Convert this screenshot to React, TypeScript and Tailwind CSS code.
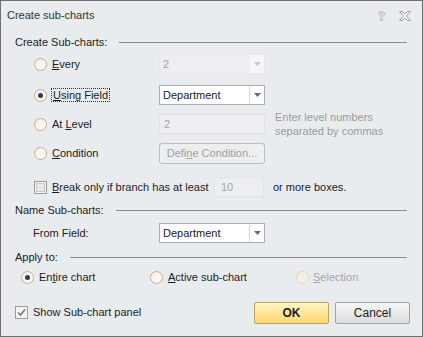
import React from 'react';

function Radio({ checked = false, disabled = false }: { checked?: boolean; disabled?: boolean }) {
  return (
    <span
      className={`relative inline-flex h-[13px] w-[13px] shrink-0 items-center justify-center rounded-full border ${
        disabled ? 'border-[#e6d6c4] bg-[#f2eee8]' : 'border-[#cfab8a] bg-gradient-to-br from-[#f4ede6] to-[#fdfcfb]'
      }`}
    >
      {checked && <span className="h-[5px] w-[5px] rounded-full bg-[#2b3f66]" />}
    </span>
  );
}

function Check({ checked = false }: { checked?: boolean }) {
  return (
    <span className="inline-flex h-[13px] w-[13px] shrink-0 items-center justify-center border border-[#9c9c9c] bg-[#f2f2f2]">
      {checked ? (
        <svg width="9" height="9" viewBox="0 0 9 9">
          <path d="M1 4.5 L3.5 7 L8 1.5" fill="none" stroke="#7a7a7a" strokeWidth="1.6" />
        </svg>
      ) : (
        <span className="h-[9px] w-[9px] border border-[#c9c9c9] bg-[#e8e8e8]" />
      )}
    </span>
  );
}

function Combo({ value, disabled = false }: { value: string; disabled?: boolean }) {
  return (
    <div
      className={`flex h-[20px] w-[106px] items-stretch border ${
        disabled ? 'border-[#e6e8ea] bg-[#eceef0] text-[#a4a4a4]' : 'border-[#abadb3] bg-white text-[#1b1b1b]'
      }`}
    >
      <span className="flex flex-1 items-center pl-[3px]">{value}</span>
      <span
        className={`flex w-[15px] items-center justify-center border-l ${
          disabled ? 'border-[#eceef0] bg-[#f6f6f6]' : 'border-[#d7d7d7] bg-white'
        }`}
      >
        <svg width="7" height="4" viewBox="0 0 7 4">
          <path d="M0 0 H7 L3.5 4 Z" fill={disabled ? '#c8c8c8' : '#6a6a6a'} />
        </svg>
      </span>
    </div>
  );
}

function Section({ title }: { title: string }) {
  return (
    <div className="flex h-[20px] items-center gap-[12px] pl-[14px] pr-[15px]">
      <span>{title}</span>
      <span className="flex-1 border-t border-[#8a8a8a]" />
    </div>
  );
}

export default function App() {
  return (
    <div
      className="flex h-[337px] w-[423px] flex-col border border-[#6f6f6f] bg-[#e9ecef] text-[11px] text-[#1b1b1b]"
      style={{ fontFamily: '"Liberation Sans", Arial, sans-serif' }}
    >
      {/* title bar */}
      <div className="flex h-[29px] items-center justify-between pl-[6px] pr-[11px]">
        <span className="text-[11px] text-[#333]">Create sub-charts</span>
        <div className="flex items-center gap-[13px]">
          <svg width="9" height="11" viewBox="0 0 9 11">
            <path
              d="M1 3.5 C1 1 8 1 8 3.5 C8 5.5 5.5 5.5 5.5 7 M3.5 7 C3.5 5 6 5 6 3.5 C6 2.5 3 2.5 3 3.5 Z M3.5 8.5 H5.5 V10.5 H3.5 Z"
              fill="none"
              stroke="#b2b2b2"
              strokeWidth="0.9"
            />
          </svg>
          <svg width="12" height="10" viewBox="0 0 12 10">
            <path
              d="M0.5 0.5 H3.5 L6 3 L8.5 0.5 H11.5 L7.5 5 L11.5 9.5 H8.5 L6 7 L3.5 9.5 H0.5 L4.5 5 Z"
              fill="#f4f4f4"
              stroke="#9a9a9a"
              strokeWidth="0.9"
            />
          </svg>
        </div>
      </div>

      <div className="mt-[2px]">
        <Section title="Create Sub-charts:" />
      </div>

      {/* main options */}
      <div className="flex flex-col pl-[33px]">
        <div className="mt-[2px] flex h-[20px] items-center">
          <Radio />
          <span className="ml-[5px] w-[107px]">
            <u>E</u>very
          </span>
          <Combo value="2" disabled />
        </div>
        <div className="mt-[11px] flex h-[20px] items-center">
          <Radio checked />
          <span className="ml-[4px] w-[108px]">
            <span className="border border-dotted border-[#333] px-[1px]">
              <u>U</u>sing Field
            </span>
          </span>
          <Combo value="Department" />
        </div>
        <div className="mt-[9px] flex h-[20px] items-center">
          <Radio />
          <span className="ml-[5px] w-[107px]">
            At <u>L</u>evel
          </span>
          <div className="flex h-[20px] w-[106px] items-center border border-[#dfe1e3] bg-[#eceef0] pl-[4px] text-[#a4a4a4]">
            2
          </div>
          <span className="ml-[10px] leading-[14px] text-[#9a9a9a]">
            Enter level numbers
            <br />
            separated by commas
          </span>
        </div>
        <div className="mt-[9px] flex h-[20px] items-center">
          <Radio />
          <span className="ml-[5px] w-[107px]">
            <u>C</u>ondition
          </span>
          <div className="flex h-[21px] w-[106px] items-center justify-center rounded-[3px] border border-[#bdbdbd] bg-[#eceef0] text-[#a0a0a0]">
            Defi<u>n</u>e Condition...
          </div>
        </div>
        <div className="mt-[14px] flex h-[20px] items-center">
          <Check />
          <span className="ml-[5px] w-[162px]">
            <u>B</u>reak only if branch has at least
          </span>
          <div className="flex h-[20px] w-[50px] items-center border border-[#e2e4e6] bg-[#eceef0] pl-[6px] text-[#a4a4a4]">
            10
          </div>
          <span className="ml-[9px]">or more boxes.</span>
        </div>
      </div>

      <div className="mt-[3px]">
        <Section title="Name Sub-charts:" />
      </div>
      <div className="mt-[3px] flex h-[20px] items-center pl-[32px]">
        <span className="w-[126px]">From Field:</span>
        <Combo value="Department" />
      </div>

      <div className="mt-[4px]">
        <Section title="Apply to:" />
      </div>
      <div className="flex h-[20px] items-center pl-[20px]">
        <Radio checked />
        <span className="ml-[5px] w-[111px]">
          En<u>t</u>ire chart
        </span>
        <Radio />
        <span className="ml-[5px] w-[128px]">
          <u>A</u>ctive sub-chart
        </span>
        <Radio disabled />
        <span className="ml-[4px] text-[#a6a6a6]">
          <u>S</u>election
        </span>
      </div>

      <div className="mt-[15px] flex h-[22px] items-center pl-[14px] pr-[12px]">
        <div className="flex flex-1 items-center self-start pt-[2px]">
          <Check checked />
          <span className="ml-[5px]">Show Sub-chart panel</span>
        </div>
        <button className="flex h-[22px] w-[75px] items-center justify-center rounded-[2px] border border-[#c2a25a] bg-gradient-to-b from-[#fff4c6] to-[#fcd96e] text-[12px] font-bold text-[#1b1b1b]">
          OK
        </button>
        <button className="ml-[6px] flex h-[22px] w-[75px] items-center justify-center rounded-[2px] border border-[#a3a3a3] bg-gradient-to-b from-[#f6f6f6] to-[#dcdcdc] text-[12px] text-[#1b1b1b]">
          Cancel
        </button>
      </div>
    </div>
  );
}
